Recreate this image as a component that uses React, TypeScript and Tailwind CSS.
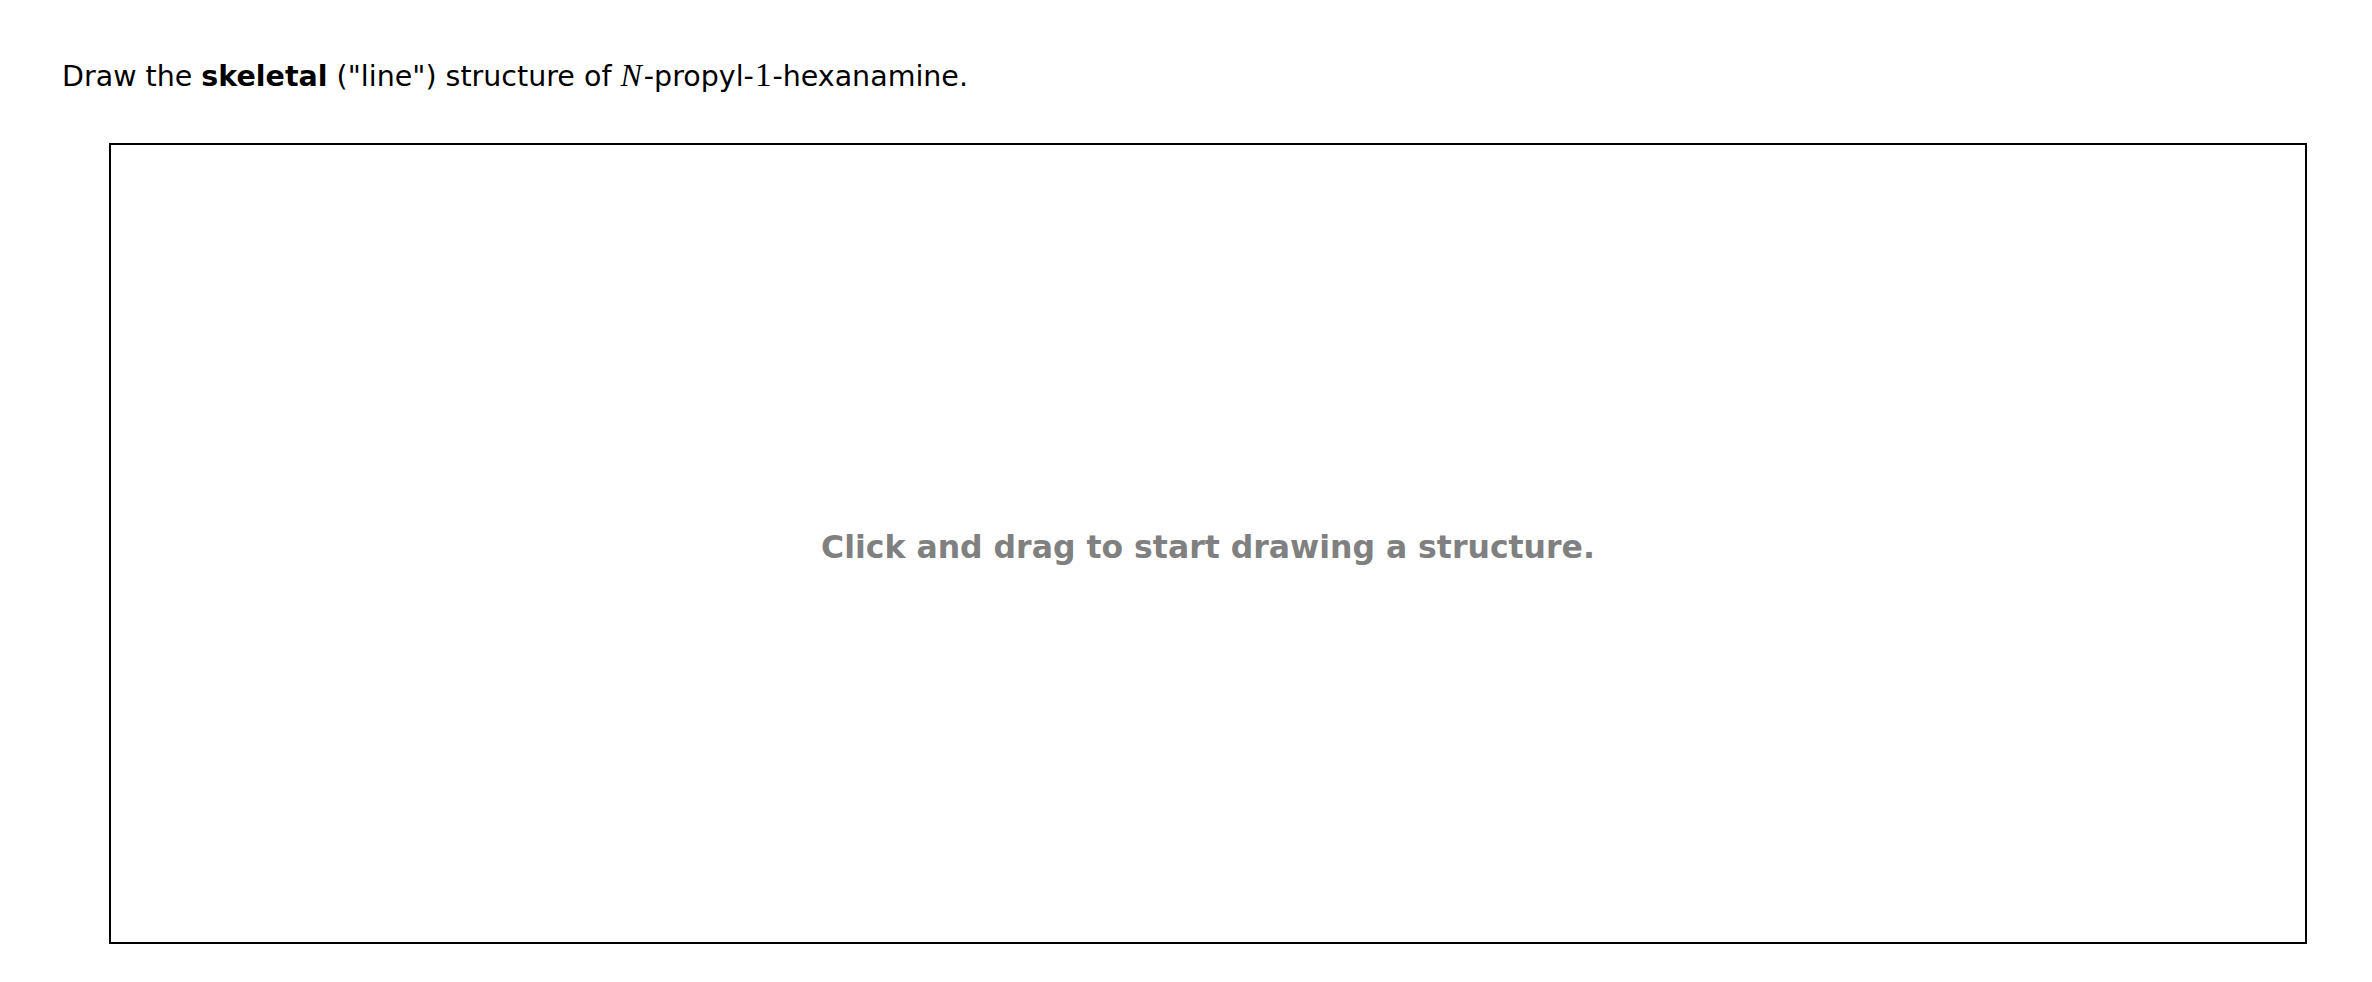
import React from "react";

export default function App() {
  return (
    <div className="w-[2372px] h-[982px] bg-white overflow-hidden" style={{ fontFamily: '"DejaVu Sans", Verdana, sans-serif' }}>
      <div className="pt-[54px] pl-[62px] text-[28.5px] leading-[43px] text-black whitespace-nowrap">
        Draw the <b className="font-bold">skeletal</b> ("line") structure of{" "}
        <span className="italic text-[32px] pr-[2px]" style={{ fontFamily: '"Liberation Serif", "DejaVu Serif", serif' }}>N</span>-propyl-
        <span className="text-[33px] px-[1px]" style={{ fontFamily: '"Liberation Serif", "DejaVu Serif", serif' }}>1</span>-hexanamine.
      </div>
      <div className="ml-[109px] mt-[45px] w-[2198px] h-[801px] pt-[8px] border-2 border-black flex items-center justify-center">
        <span className="text-[31.5px] font-bold text-[#808080] whitespace-nowrap">Click and drag to start drawing a structure.</span>
      </div>
    </div>
  );
}
